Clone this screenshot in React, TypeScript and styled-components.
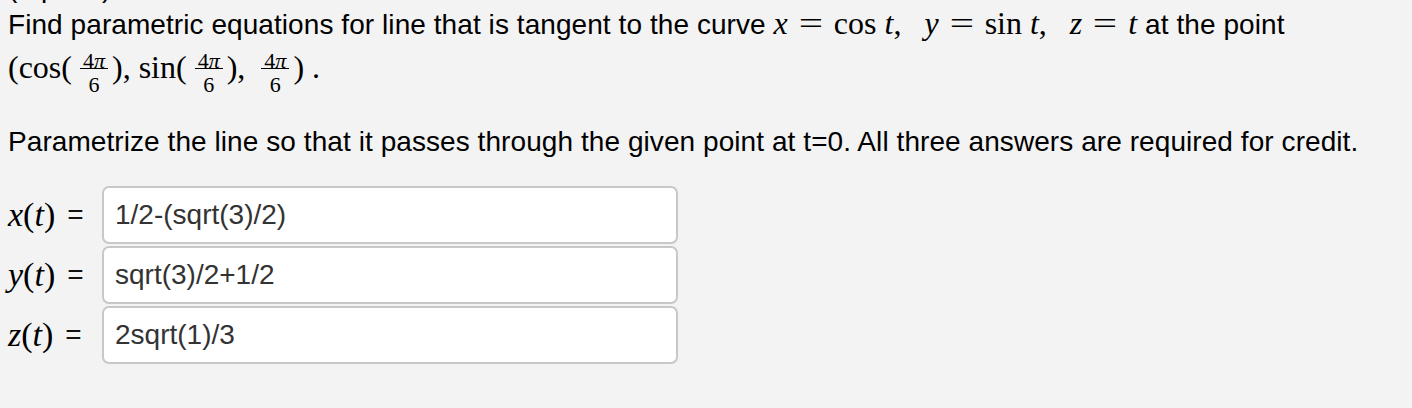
import styled, { createGlobalStyle } from 'styled-components';

const Global = createGlobalStyle`
  body {
    margin: 0;
    background: #f3f3f3;
  }
`;

const Page = styled.div`
  padding: 0 8px;
  font-family: 'Liberation Sans', Arial, sans-serif;
  font-size: 28px;
  letter-spacing: 0.07px;
  color: #000;
`;

const Para = styled.p<{ $top?: number; $gap?: number; $lh?: number }>`
  margin: ${(p) => p.$top ?? 0}px 0 ${(p) => p.$gap ?? 0}px;
  line-height: ${(p) => p.$lh ?? 32}px;
`;

const M = styled.span<{ $size?: number }>`
  font-family: 'Liberation Serif', 'Times New Roman', serif;
  font-size: ${(p) => p.$size ?? 32}px;
  letter-spacing: 0;
`;

const I = styled.i`
  font-style: italic;
`;

const Rel = styled.span`
  display: inline-block;
  margin: 0 14px;
  transform: scaleX(1.35);
`;

const Comma = styled.span`
  margin-right: 23px;
`;

const Frac = styled.span`
  display: inline-flex;
  flex-direction: column;
  align-items: stretch;
  text-align: center;
  vertical-align: 10px;
  font-size: 22px;
  line-height: 15px;
  margin: 0 4px 0 8px;

  span:first-child {
    border-bottom: 1.5px solid #000;
    padding: 0 3px;
  }
  span:last-child {
    padding-top: 8px;
  }
`;

const Answers = styled.div`
  display: flex;
  flex-direction: column;
  gap: 2px;
`;

const Row = styled.div`
  display: flex;
  align-items: center;
`;

const Label = styled.div`
  width: 94px;
  display: flex;
  align-items: center;
  gap: 12px;
`;

const Eq = styled.span`
  font-size: 28px;
  color: #111;
`;

const Field = styled.input`
  box-sizing: border-box;
  width: 576px;
  height: 58px;
  border: 2px solid #c8c8c8;
  border-radius: 7px;
  background: #fff;
  padding: 0 11px;
  font-family: 'Liberation Sans', Arial, sans-serif;
  font-size: 28px;
  color: #333;
  outline: none;
`;

const fourPi = (
  <Frac>
    <span>
      4<I>π</I>
    </span>
    <span>6</span>
  </Frac>
);

const answers = [
  { v: 'x', val: '1/2-(sqrt(3)/2)' },
  { v: 'y', val: 'sqrt(3)/2+1/2' },
  { v: 'z', val: '2sqrt(1)/3' },
];

export default function App() {
  return (
    <Page>
      <Global />
      <Para $top={-28}>(1 point)</Para>
      <Para $top={-2} $gap={34} $lh={43}>
        Find parametric equations for line that is tangent to the curve{' '}
        <M>
          <I>x</I>
          <Rel>=</Rel>cos <I>t</I>
          <Comma>,</Comma>
          <I>y</I>
          <Rel>=</Rel>sin <I>t</I>
          <Comma>,</Comma>
          <I>z</I>
          <Rel>=</Rel>
          <I>t</I>
        </M>{' '}
        at the point
        <br />
        <M>
          (cos({fourPi}), sin({fourPi}), {fourPi}) .
        </M>
      </Para>
      <Para $gap={28}>
        Parametrize the line so that it passes through the given point at t=0. All three answers are
        required for credit.
      </Para>
      <Answers>
        {answers.map((a) => (
          <Row key={a.v}>
            <Label>
              <M $size={34}>
                <I>{a.v}</I>(<I>t</I>)
              </M>
              <Eq>=</Eq>
            </Label>
            <Field defaultValue={a.val} />
          </Row>
        ))}
      </Answers>
    </Page>
  );
}
